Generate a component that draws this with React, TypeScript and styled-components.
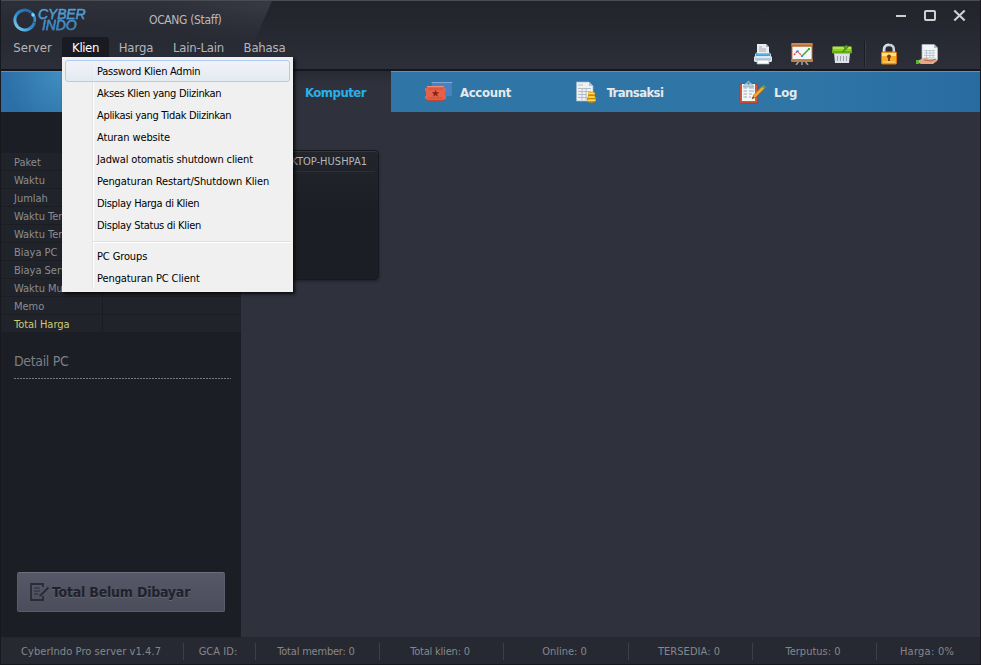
import React from "react";
import styled, { createGlobalStyle, css } from "styled-components";

const GlobalStyle = createGlobalStyle`
  * { box-sizing: border-box; }
  body { margin: 0; background: #16181d; }
  svg { display: block; flex: none; }
`;

const Window = styled.div`
  width: 981px;
  height: 665px;
  display: flex;
  flex-direction: column;
  border: 1px solid #17191e;
  border-top: 0;
  overflow: hidden;
  background: #2f323d;
  font-family: "DejaVu Sans Condensed", "DejaVu Sans", sans-serif;
  font-stretch: condensed;
  font-size: 11px;
  color: #b4b5b8;
  white-space: nowrap;
`;

const Header = styled.header`
  position: relative;
  height: 71px;
  flex: none;
  background: linear-gradient(180deg, #22242c 0%, #292b35 75%, #2c2e39 100%);
  border-top: 1px solid #4a4c54;
  border-bottom: 2px solid #15171c;
`;

const Sheen = styled.div`
  position: absolute;
  inset: 0 auto 0 0;
  width: 271px;
  clip-path: polygon(0 0, 100% 0, 89% 100%, 0 100%);
  background: linear-gradient(100deg, #2c2e38 0%, #2e303a 60%, #383a43 100%);
  mask-image: linear-gradient(180deg, #000 10%, transparent 66%);
`;

const TitleRow = styled.div`
  position: relative;
  display: flex;
  justify-content: space-between;
  height: 36px;
  padding: 0 14px 0 12px;
`;

const Brand = styled.div`
  display: flex;
  padding-top: 6px;
`;

const Wordmark = styled.div`
  width: 50px;
  margin: 2px 0 0 0;
  font: italic 400 14px/11px "Liberation Sans", sans-serif;
  letter-spacing: -0.15px;
  background: linear-gradient(180deg, #5baadd, #2c6da6);
  background-clip: text;
  color: transparent;
  span { display: block; -webkit-text-stroke: 0.4px #4390ca; }
  span + span { padding-left: 4px; }
`;

const UserName = styled.div`
  padding: 5px 0 0 61px;
  line-height: 17px;
  font-size: 12px;
  letter-spacing: -0.35px;
  color: #b9babd;
`;

const WindowButtons = styled.div`
  display: flex;
  gap: 17px;
  padding-top: 8px;
`;

const MenuRow = styled.div`
  position: relative;
  display: flex;
  justify-content: space-between;
  padding: 0 41px 0 2px;
`;

const MenuBar = styled.nav`
  display: flex;
  height: 20px;
`;

const MenuItem = styled.div<{ $width: number; $open?: boolean; $spacing?: number }>`
  position: relative;
  width: ${(p) => p.$width}px;
  text-align: center;
  line-height: 22px;
  font-size: 13px;
  letter-spacing: ${(p) => p.$spacing ?? 0}px;
  color: #b5b6b9;
  ${(p) =>
    p.$open &&
    css`
      background: #191b22;
      color: #fff;
      border-radius: 3px 3px 0 0;
    `}
`;

const Dropdown = styled.div`
  position: absolute;
  z-index: 5;
  left: 0;
  top: 20px;
  width: 231px;
  height: 235px;
  padding: 3px;
  background: linear-gradient(90deg, transparent 27px, #e2e3e3 27px, #e2e3e3 28px, #fff 28px, #fff 29px, transparent 29px) content-box, #f0f0f0;
  box-shadow: 2px 2px 3px rgba(0, 0, 0, 0.75);
  color: #000;
  font-size: 11px;
  text-align: left;
`;

const Option = styled.div<{ $active?: boolean; $spacing: number }>`
  height: 22px;
  line-height: 24px;
  padding-left: 32px;
  letter-spacing: ${(p) => p.$spacing}px;
  ${(p) =>
    p.$active &&
    css`
      border: 1px solid #aeccf4;
      border-radius: 3px;
      padding-left: 31px;
      line-height: 21px;
      background: linear-gradient(180deg, rgba(240, 244, 250, 0.75), rgba(222, 231, 244, 0.65));
    `}
`;

const Divider = styled.div`
  height: 9px;
  margin-left: 28px;
  background: linear-gradient(180deg, transparent 5px, #dedede 5px, #dedede 6px, #fff 6px, #fff 7px, transparent 7px);
`;

const Tools = styled.div`
  display: flex;
  align-items: center;
  height: 24px;
  margin-top: 5px;
`;

const Tool = styled.div<{ $gap: number }>`
  margin-right: ${(p) => p.$gap}px;
`;

const ToolRule = styled.div`
  width: 2px;
  height: 26px;
  margin-right: 14px;
  background: #1b1d23;
  border-right: 1px solid #393b45;
`;

const Tabs = styled.nav`
  display: flex;
  flex: none;
  height: 41px;
  padding-left: 240px;
  background:
    radial-gradient(circle at 66px 0, #4190c2 0, rgba(47, 118, 166, 0) 62px),
    linear-gradient(90deg, #2c6fa9, #2f76a6 12%, #2f76a6 82%, #286ba1 100%);
  box-shadow: inset 0 1px #5b93b9;
`;

const Tab = styled.div<{ $current?: boolean; $gap: number; $spacing: number; $shift?: number }>`
  width: 150px;
  display: flex;
  align-items: center;
  justify-content: center;
  gap: ${(p) => p.$gap}px;
  padding: 1px 0 0 ${(p) => p.$shift ?? 0}px;
  font: 700 13px/18px "DejaVu Sans Condensed", "DejaVu Sans", sans-serif;
  font-stretch: condensed;
  letter-spacing: ${(p) => p.$spacing}px;
  color: #e6e9ec;
  ${(p) =>
    p.$current &&
    css`
      color: #28b0ec;
      background: linear-gradient(180deg, #272933, #2f323d 14px);
    `}
`;

const TabLabel = styled.span`
  padding-top: 1px;
`;

const Body = styled.div`
  display: flex;
  flex: 1;
  min-height: 0;
`;

const Sidebar = styled.aside`
  width: 240px;
  flex: none;
  display: flex;
  flex-direction: column;
  padding-top: 41px;
  background: #1b1e24;
`;

const InfoRow = styled.div<{ $total?: boolean }>`
  display: grid;
  grid-template-columns: 102px 1fr;
  height: 18px;
  line-height: 19px;
  background: #20232a;
  border-bottom: 1px solid #1b1d23;
  letter-spacing: -0.02px;
  color: ${(p) => (p.$total ? "#cdcb70" : "#8b8d91")};
`;

const InfoLabel = styled.div`
  height: 17px;
  padding-left: 13px;
  border-right: 1px solid #1a1c22;
`;

const DetailTitle = styled.h2`
  margin: 19px 10px 0 13px;
  height: 27px;
  background: repeating-linear-gradient(90deg, #777a7e 0 2px, transparent 2px 3px) 0 100% / 100% 1px no-repeat;
  font-size: 14px;
  font-weight: 400;
  line-height: 18px;
  letter-spacing: -0.35px;
  color: #7c7e82;
`;

const PayButton = styled.button`
  display: flex;
  align-items: center;
  margin: auto 15px 25px 16px;
  width: 208px;
  height: 40px;
  padding: 0 0 0 12px;
  gap: 2px;
  border: 1px solid #5b5d6c;
  border-top-color: #6c6e7b;
  border-radius: 2px;
  background: linear-gradient(180deg, #565868, #4b4d5b);
  font: 700 14px "DejaVu Sans Condensed", "DejaVu Sans", sans-serif;
  font-stretch: condensed;
  letter-spacing: -0.22px;
  color: #20222b;
  text-shadow: 0 1px rgba(255, 255, 255, 0.12);
`;

const Workspace = styled.main`
  flex: 1;
  padding: 38px 0 0 10px;
  background: #2f323d;
`;

const ClientCard = styled.section`
  width: 128px;
  height: 130px;
  padding: 0 3px;
  border: 1px solid #17191f;
  border-radius: 4px;
  background: linear-gradient(180deg, #22252c, #1b1e24 50%);
  box-shadow: inset 0 1px #343741, 0 1px 3px rgba(0, 0, 0, 0.4);
`;

const ClientName = styled.div`
  height: 21px;
  padding-right: 8px;
  line-height: 21px;
  border-bottom: 1px solid #2c2f37;
  text-align: right;
  letter-spacing: 0.02px;
  color: #b4b5b8;
`;

const StatusBar = styled.footer`
  display: grid;
  grid-template-columns: 183px 72px 124px 124px 125px 124px 124px 1fr;
  align-items: center;
  flex: none;
  height: 27px;
  background: #272932;
  border-top: 1px solid #252730;
`;

const StatusCell = styled.div<{ $spacing: number }>`
  height: 17px;
  padding-right: 3px;
  line-height: 17px;
  text-align: center;
  letter-spacing: ${(p) => p.$spacing}px;
  color: #85878b;
  border-right: 1px solid #3d3f48;
  &:first-child { padding-right: 2px; }
  &:last-child { border-right: 0; }
`;

const LogoMark = () => (
  <svg width="25" height="25" viewBox="0 0 25 25" fill="none">
    <defs>
      <linearGradient id="ring" x1="0" y1="1" x2="1" y2="0">
        <stop offset="0" stopColor="#8bd5f5" />
        <stop offset=".45" stopColor="#2b8dcf" />
        <stop offset="1" stopColor="#235c93" />
      </linearGradient>
    </defs>
    <path d="M18.2 5.4A9.9 9.9 0 1 0 21.4 15.5" stroke="url(#ring)" strokeWidth="3" />
    <path d="M18.6 5.6A9.9 9.9 0 0 1 21.6 15" stroke="#2d91ce" strokeWidth="2.6" />
    <circle cx="20" cy="8" r="1.7" fill="#7ed9fa" />
  </svg>
);

const Minimize = () => (
  <svg width="12" height="13" viewBox="0 0 12 13"><path d="M1 7H11" stroke="#cfd0d2" strokeWidth="2" /></svg>
);
const Maximize = () => (
  <svg width="12" height="13" viewBox="0 0 12 13"><rect x="1" y="2" width="10" height="9" rx="1" fill="none" stroke="#cfd0d2" strokeWidth="2" /></svg>
);
const Close = () => (
  <svg width="13" height="13" viewBox="0 0 13 13"><path d="M1.3 1.5L11.7 11.5M11.7 1.5L1.3 11.5" stroke="#cfd0d2" strokeWidth="2.1" /></svg>
);

const PrinterIcon = () => (
  <svg width="20" height="22" viewBox="0 0 20 22">
    <path d="M4 1H13L16 4V11H4Z" fill="#e9edf0" />
    <path d="M13 1V4H16Z" fill="#aab2b9" />
    <path d="M6 4H9M6 6H13M6 8H13" stroke="#a3abb3" />
    <path d="M2 11L4 9V12H16V9L18 11V13H2Z" fill="#bfd3e3" />
    <path d="M3 10H17V14H3Z" fill="#3da0df" />
    <path d="M4 10H16V11.5H4Z" fill="#77c5f1" />
    <rect x="1" y="13" width="18" height="6" rx="1.5" fill="#dce9f3" />
    <path d="M2 16H18" stroke="#8daec7" />
    <path d="M4 17H16V21H4Z" fill="#fbfcfd" stroke="#9aadbc" strokeWidth=".7" />
  </svg>
);
const ChartIcon = () => (
  <svg width="22" height="22" viewBox="0 0 22 22">
    <path d="M8 18L5 22M11 18V22M14 18L17 22" stroke="#9ba0a7" strokeWidth="1.6" />
    <path d="M1 3H21V17H1Z" fill="#f5f8fb" stroke="#bf7840" />
    <rect x="0" y="0" width="22" height="3.4" rx="1" fill="#b46b35" />
    <path d="M1 1H21" stroke="#e4a673" />
    <rect x="0" y="16" width="22" height="3" rx="1" fill="#c3804a" />
    <path d="M3 12L6.5 8L11 13" fill="none" stroke="#dd3d4a" strokeWidth="1.2" strokeDasharray="2 .7" />
    <path d="M11 13L18 6" stroke="#39a526" strokeWidth="1.4" />
    <path d="M5.5 7.2H7.5V9.2H5.5ZM10 12H12V14H10Z" fill="#3594e2" />
    <path d="M17 5H19V7H17Z" fill="#41b51e" />
  </svg>
);
const BasketIcon = () => (
  <svg width="20" height="20" viewBox="0 0 20 20">
    <path d="M2 9H18L17 19H3Z" fill="#dfe1e8" />
    <path d="M5.5 12V17M8.5 12V17M11.5 12V17M14.5 12V17" stroke="#9a9eae" />
    <rect x=".5" y="2.5" width="19" height="4" fill="#b2e749" />
    <rect x="0" y="5.5" width="20" height="4" rx="1" fill="#61ae16" />
    <path d="M1 6.5H19" stroke="#8ed12a" />
    <path d="M10 8L13 5.5L12 3L13.5 1.5Q16 1 16 3Q15.5 5 10 8Z" fill="#5ba41b" stroke="#3f830e" strokeWidth=".8" />
  </svg>
);
const LockIcon = () => (
  <svg width="18" height="22" viewBox="0 0 18 22">
    <path d="M4.2 10V6.5Q4.2 2 9 2Q13.8 2 13.8 6.5V10" fill="none" stroke="#c5d4df" strokeWidth="2.6" />
    <path d="M3.2 9V6Q4 1 9 1" fill="none" stroke="#f2f7fa" strokeWidth=".8" />
    <rect x="1.5" y="9" width="15" height="12" rx="1" fill="#f5ac30" stroke="#d97808" />
    <path d="M2 10H16V13H2Z" fill="#ffe08b" />
    <path d="M3 18H15V20H3Z" fill="#ffc458" />
    <circle cx="9" cy="13.5" r="2" fill="#75430b" />
    <path d="M8 14H10V18H8Z" fill="#75430b" />
  </svg>
);
const InvoiceIcon = () => (
  <svg width="23" height="21" viewBox="0 0 23 21">
    <path d="M6 .5H18L21.5 4V16H6Z" fill="#f2f5f8" stroke="#acb8c3" strokeWidth=".8" />
    <path d="M18 0V4H22Z" fill="#aab9c7" />
    <path d="M8 6.5H19M8 9H19M8 11.5H19M8 14H19M10.5 6V14M14 6V14M17 6V14" stroke="#b4bfc9" strokeWidth=".8" />
    <path d="M3 16L8 14Q12 13 12 15L20 15Q22 15 21 17L17 20H5L3 19Z" fill="#e3a98a" />
    <path d="M8 16L15 17L20 15" fill="none" stroke="#a85d3b" strokeWidth=".8" />
    <path d="M0 16H3V20H0Z" fill="#59b72b" />
  </svg>
);
const TicketIcon = () => (
  <svg width="28" height="22" viewBox="0 0 28 22">
    <path d="M7 1H27V15H7Z" fill="#4a80c4" />
    <path d="M6.5 1.5H27.5" stroke="#7fa5dd" />
    <path d="M27 3V15" stroke="#2f76a6" strokeDasharray="1 1" />
    <path d="M2 5H19V7H21V10H20V15H21V18H19V20H2V18H0V15H1V10H0V7H2Z" fill="#e2634a" />
    <path d="M2 5.5H19" stroke="#f58a6c" />
    <path d="M2 19.5H19" stroke="#b9452f" />
    <path d="M3 8H18M3 17H18" stroke="#c94a35" strokeWidth=".8" />
    <path d="M10.5 8.7L11.5 11.3H14.3L12.1 13L12.9 15.7L10.5 14L8.1 15.7L8.9 13L6.7 11.3H9.5Z" fill="#8e200c" />
  </svg>
);
const TransactionIcon = () => (
  <svg width="20" height="22" viewBox="0 0 20 22">
    <path d="M.5 1H13L17 5V20H.5Z" fill="#eff2f4" stroke="#a2b7c7" strokeWidth=".7" />
    <path d="M13 1V5H17Z" fill="#b5c2ca" />
    <path d="M2 4H7M2 7.5H15M2 10.5H15M2 13.5H11M2 16.5H11M6 7V19M10 7V19" stroke="#b3bdc3" />
    <path d="M12 11.5Q16 10 19 12V15.5L20 17V20Q16 23 11 20.5V17L12 15Z" fill="#e6a60c" />
    <path d="M12.5 12.5H18.5M12.5 16H18.5M12 19.2H19" stroke="#ffe15a" strokeWidth="1.7" />
    <path d="M12 14.2H19M11.5 17.8H20M12 21H19" stroke="#b27202" strokeWidth=".8" />
  </svg>
);
const LogIcon = () => (
  <svg width="27" height="24" viewBox="0 0 27 24">
    <rect x=".8" y="4" width="18" height="19" rx="1" fill="#cf573d" stroke="#a9362a" strokeWidth=".7" />
    <path d="M3 4H16V21H3Z" fill="#f3f6f8" />
    <path d="M4.5 8H8M10 8H15M4.5 11H8M10 11H15M4.5 14H8M10 14H13M4.5 17H8M10 17H12" stroke="#9eabb4" />
    <path d="M4.5 6L7 3H8Q9.5-.8 11 3H12L14.5 6V7H4.5Z" fill="#b7cfdf" stroke="#7ba2bd" strokeWidth=".6" />
    <circle cx="9.5" cy="3.4" r="1" fill="#36759d" />
    <path d="M13 19L15 14.5L23 6.5L25.5 8.5L17 17Z" fill="#f3aa2c" stroke="#a46518" strokeWidth=".6" />
    <path d="M23 6.5L24.5 5L27 7L25.5 8.5Z" fill="#6b9f53" />
    <path d="M13 19L14 16.5L15.4 17.6Z" fill="#5d3d20" />
  </svg>
);
const EditIcon = () => (
  <svg width="20" height="18" viewBox="0 0 20 18" fill="none" stroke="#292b35" strokeWidth="1.8">
    <path d="M13 4V1H1V17H13V13" />
    <path d="M4 5H10M4 8H10M4 11H8" strokeWidth="1.2" />
    <path d="M18.5 4.5L11 12L9.5 12.8" strokeWidth="2" />
  </svg>
);

const options: [string, number][] = [
  ["Password Klien Admin", -0.25],
  ["Akses Klien yang Diizinkan", -0.31],
  ["Aplikasi yang Tidak Diizinkan", -0.33],
  ["Aturan website", -0.12],
  ["Jadwal otomatis shutdown client", -0.15],
  ["Pengaturan Restart/Shutdown Klien", -0.11],
  ["Display Harga di Klien", -0.31],
  ["Display Status di Klien", -0.3],
];

const groupOptions: [string, number][] = [
  ["PC Groups", -0.12],
  ["Pengaturan PC Client", -0.1],
];

const infoLabels = ["Paket", "Waktu", "Jumlah", "Waktu Terpakai", "Waktu Tersisa", "Biaya PC", "Biaya Service", "Waktu Mulai", "Memo", "Total Harga"];

const statuses: [string, number][] = [
  ["CyberIndo Pro server v1.4.7", 0.07],
  ["GCA ID:", 0.05],
  ["Total member: 0", -0.2],
  ["Total klien: 0", -0.2],
  ["Online: 0", 0],
  ["TERSEDIA: 0", 0.05],
  ["Terputus: 0", 0],
  ["Harga: 0%", 0.25],
];

export default function App() {
  return (
    <>
      <GlobalStyle />
      <Window>
        <Header>
          <Sheen />
          <TitleRow>
            <Brand>
              <LogoMark />
              <Wordmark><span>CYBER</span><span>INDO</span></Wordmark>
              <UserName>OCANG (Staff)</UserName>
            </Brand>
            <WindowButtons><Minimize /><Maximize /><Close /></WindowButtons>
          </TitleRow>
          <MenuRow>
            <MenuBar>
              <MenuItem $width={59} $spacing={0.05}>Server</MenuItem>
              <MenuItem $width={47} $open $spacing={-0.4}>
                Klien
                <Dropdown>
                  {options.map(([label, spacing], i) => (
                    <Option key={label} $active={i === 0} $spacing={spacing}>{label}</Option>
                  ))}
                  <Divider />
                  {groupOptions.map(([label, spacing]) => (
                    <Option key={label} $spacing={spacing}>{label}</Option>
                  ))}
                </Dropdown>
              </MenuItem>
              <MenuItem $width={54} $spacing={-0.1}>Harga</MenuItem>
              <MenuItem $width={71} $spacing={-0.2}>Lain-Lain</MenuItem>
              <MenuItem $width={61} $spacing={-0.2}>Bahasa</MenuItem>
            </MenuBar>
            <Tools>
              <Tool $gap={18}><PrinterIcon /></Tool>
              <Tool $gap={19}><ChartIcon /></Tool>
              <Tool $gap={12}><BasketIcon /></Tool>
              <ToolRule />
              <Tool $gap={18}><LockIcon /></Tool>
              <Tool $gap={0}><InvoiceIcon /></Tool>
            </Tools>
          </MenuRow>
        </Header>
        <Tabs>
          <Tab $current $gap={0} $spacing={-0.5} $shift={39}><TabLabel>Komputer</TabLabel></Tab>
          <Tab $gap={7} $spacing={-0.3} $shift={4}><TicketIcon /><TabLabel>Account</TabLabel></Tab>
          <Tab $gap={11} $spacing={-0.6} $shift={7}><TransactionIcon /><TabLabel>Transaksi</TabLabel></Tab>
          <Tab $gap={8} $spacing={-0.3} $shift={4}><LogIcon /><TabLabel>Log</TabLabel></Tab>
        </Tabs>
        <Body>
          <Sidebar>
            {infoLabels.map((label) => (
              <InfoRow key={label} $total={label === "Total Harga"}><InfoLabel>{label}</InfoLabel></InfoRow>
            ))}
            <DetailTitle>Detail PC</DetailTitle>
            <PayButton><EditIcon />Total Belum Dibayar</PayButton>
          </Sidebar>
          <Workspace>
            <ClientCard><ClientName>DESKTOP-HUSHPA1</ClientName></ClientCard>
          </Workspace>
        </Body>
        <StatusBar>
          {statuses.map(([label, spacing]) => (
            <StatusCell key={label} $spacing={spacing}>{label}</StatusCell>
          ))}
        </StatusBar>
      </Window>
    </>
  );
}
